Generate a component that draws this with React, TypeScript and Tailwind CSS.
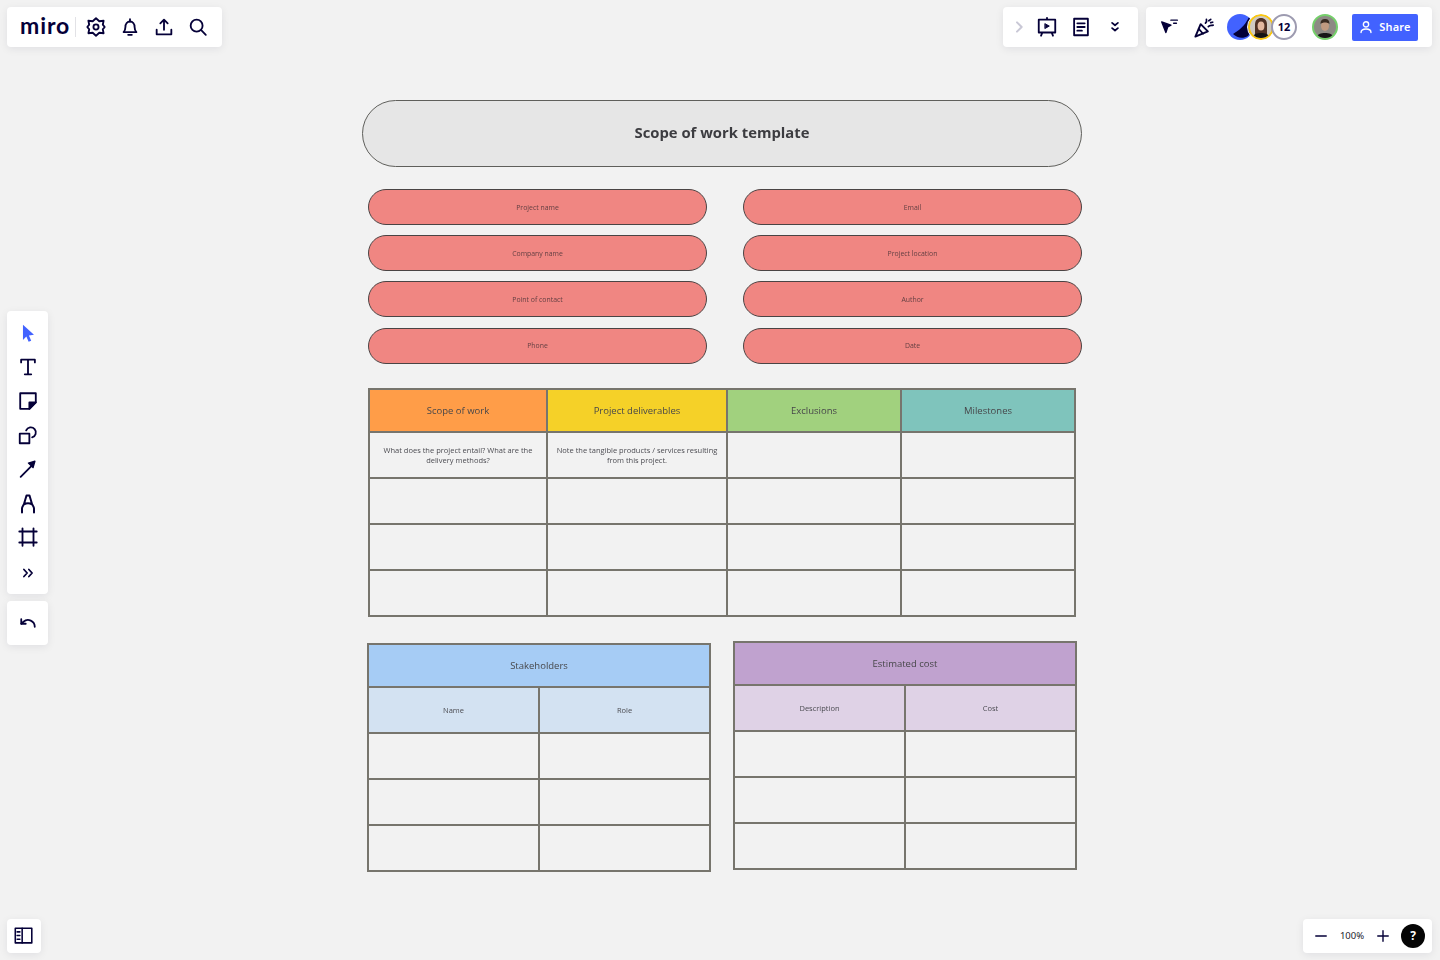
import type { ReactNode } from "react";

const INK = "#050038";

const PROJECT_FIELDS = ["Project name", "Email", "Company name", "Project location", "Point of contact", "Author", "Phone", "Date"];

function Icon({ children, size = 24 }: { children: ReactNode; size?: number }) {
  return (
    <svg width={size} height={size} viewBox="0 0 24 24" fill="none" stroke={INK} strokeWidth="2" strokeLinecap="round" strokeLinejoin="round">
      {children}
    </svg>
  );
}

function Slot({ children, className = "w-[34px] h-[34px]" }: { children: ReactNode; className?: string }) {
  return <div className={`${className} flex items-center justify-center shrink-0`}>{children}</div>;
}

function Panel({ children, className }: { children: ReactNode; className: string }) {
  return <div className={`absolute bg-white rounded-[4px] shadow-[0_2px_8px_rgba(5,0,56,0.08)] flex ${className}`}>{children}</div>;
}

function TopLeftBar() {
  return (
    <Panel className="left-[7px] top-[7px] w-[215px] h-[40px] items-center">
      <span className="ml-[13px] w-[52px] text-[23px] leading-none font-bold text-[#050038] tracking-[0.9px] font-['Lato',sans-serif] -mt-[3px]">miro</span>
      <div className="w-px h-[20px] bg-[#e2e2e6] ml-[3px] mr-[3px]" />
      <Slot>
        <Icon size={22}>
          <path d="M12 2.500l3.600 3.200 4.700-.5-.9 4.300L21.500 12l-2.100 2.500.9 4.300-4.700-.5-3.600 3.200-3.600-3.200-4.700.5.9-4.300L2.500 12l2.100-2.500-.9-4.300 4.700.5z" />
          <circle cx="12" cy="12" r="2.800" />
        </Icon>
      </Slot>
      <Slot>
        <Icon size={22}>
          <path d="M5 17.500c1.500-1.500 2-3 2-5.500 0-3.500 2-6 5-6s5 2.500 5 6c0 2.500.5 4 2 5.500z" />
          <path d="M12 3.500V6M10 20.500h4" />
        </Icon>
      </Slot>
      <Slot>
        <Icon size={22}>
          <path d="M12 15V4M8 8l4-4 4 4M4 15v5h16v-5" />
        </Icon>
      </Slot>
      <Slot>
        <Icon size={22}>
          <circle cx="10.500" cy="10.500" r="6.500" />
          <path d="M15.500 15.500L20.500 20.500" />
        </Icon>
      </Slot>
    </Panel>
  );
}

function PresentBar() {
  return (
    <Panel className="left-[1003px] top-[7px] w-[135px] h-[40px] items-center">
      <Slot className="w-[32px] h-[34px]">
        <svg width="16" height="16" viewBox="0 0 24 24" fill="none" stroke="#c9c8d6" strokeWidth="3" strokeLinecap="round" strokeLinejoin="round">
          <path d="M9 5l7 7-7 7" />
        </svg>
      </Slot>
      <Slot className="w-[24px] h-[34px]">
        <Icon size={22}>
          <path d="M12 2v2M3 4h18v14H3zM7 18l-1.500 3.500M17 18l1.500 3.500" />
          <path d="M10 8.500l4.500 2.500-4.500 2.500z" fill={INK} strokeWidth="1" />
        </Icon>
      </Slot>
      <Slot className="w-[44px] h-[34px]">
        <Icon size={22}>
          <path d="M4.500 3h15v18h-15zM8 8h8M8 12h8M8 16h5" />
        </Icon>
      </Slot>
      <Slot className="w-[24px] h-[34px]">
        <Icon size={14}>
          <path d="M7 5l5 4 5-4M7 14l5 4 5-4" strokeWidth="3" />
        </Icon>
      </Slot>
    </Panel>
  );
}

function CollabBar() {
  return (
    <Panel className="left-[1146px] top-[7px] w-[286px] h-[40px] items-center">
      <Slot className="w-[34px] h-[34px] ml-[7px]">
        <Icon size={22}>
          <path d="M3 6.500l10 3.500-3.500 2-2 6z" fill={INK} strokeWidth="1.500" />
          <path d="M13 4.500h7M16 8h3" strokeWidth="1.600" />
        </Icon>
      </Slot>
      <Slot className="w-[34px] h-[34px]">
        <Icon size={23}>
          <path d="M2.500 21.500L8 8.500l7.500 7.500z" />
          <path d="M6 13.500l4.500 5M13 7.500c1-1 1.500-2.500 1-4M16 11c1.500-1.500 3-1 5-1.500M16.500 5l2-1.500M18.500 7l2-.5" strokeWidth="1.800" />
        </Icon>
      </Slot>
      <div className="flex items-center ml-[6px] w-[72px] relative h-[26px]">
        <div className="w-[26px] h-[26px] rounded-full bg-[#4262ff] overflow-hidden shrink-0">
          <svg width="26" height="26" viewBox="0 0 26 26">
            <path d="M22 3C19 9 16 14 6 20C10 24 16 25 21 22L26 14L26 3z" fill="#050038" />
          </svg>
        </div>
        <div className="w-[26px] h-[26px] rounded-full border-[2px] border-[#fac710] bg-[#cfcac2] overflow-hidden shrink-0 -ml-[5px] z-10 outline outline-white">
          <svg width="22" height="22" viewBox="0 0 22 22">
            <path d="M5 20V9c0-5 2.500-7 6-7s6 2 6 7v11z" fill="#4f3124" />
            <ellipse cx="11" cy="10" rx="3.400" ry="4.600" fill="#e2b79e" />
            <path d="M2 22c1-4 5-5 9-5s8 1 9 5z" fill="#141414" />
          </svg>
        </div>
        <div className="w-[26px] h-[26px] rounded-full border-[2px] border-[#9d9bb0] bg-white shrink-0 -ml-[3px] z-20 flex items-center justify-center text-[11px] font-bold text-[#050038] font-['Noto_Sans',sans-serif]">12</div>
      </div>
      <div className="w-[26px] h-[26px] rounded-full border-[2px] border-[#75cf6b] bg-[#8d8a84] overflow-hidden shrink-0 ml-[13px]">
        <svg width="22" height="22" viewBox="0 0 22 22">
          <ellipse cx="11" cy="10" rx="4" ry="5" fill="#c09a80" />
          <path d="M6.500 8c0-4 2-5 4.500-5s4.500 1 4.500 5c-2-2-7-2-9 0z" fill="#3a2c22" />
          <path d="M2 22c1-4 5-5 9-5s8 1 9 5z" fill="#161616" />
        </svg>
      </div>
      <button className="ml-[14px] w-[66px] h-[27px] rounded-[2px] bg-[#4262ff] flex items-center justify-center gap-[6px] text-white text-[11px] font-semibold font-['Noto_Sans',sans-serif] tracking-[0.2px]">
        <svg width="14" height="14" viewBox="0 0 24 24" fill="none" stroke="#fff" strokeWidth="2.400" strokeLinecap="round" strokeLinejoin="round">
          <circle cx="12" cy="7.500" r="4.500" />
          <path d="M3.500 21.500c0-4 3.500-6 8.500-6s8.500 2 8.500 6" />
        </svg>
        Share
      </button>
    </Panel>
  );
}

function ToolBar() {
  return (
    <Panel className="left-[7px] top-[311px] w-[41px] h-[283px] flex-col items-center pt-[5px]">
      <Slot>
        <svg width="22" height="22" viewBox="0 0 24 24" fill="#4262ff">
          <path d="M6.500 3l12 11-5.500.8 2.500 5.700-2.800 1-2.500-5.700-3.700 3.700z" />
        </svg>
      </Slot>
      <Slot>
        <Icon size={22}>
          <path d="M4.500 7V4h15v3M12 4v16M8.500 20h7" />
        </Icon>
      </Slot>
      <Slot>
        <Icon size={22}>
          <path d="M3.500 3.500h17v10l-7 7h-10z" />
          <path d="M20.500 13.500l-7 7v-7z" fill={INK} />
        </Icon>
      </Slot>
      <Slot>
        <Icon size={22}>
          <rect x="3" y="10.500" width="10.500" height="10.500" />
          <path d="M10 7a5.500 5.500 0 1 1 6.500 7.500" />
        </Icon>
      </Slot>
      <Slot>
        <Icon size={22}>
          <path d="M4 20.500L17 7.500" />
          <path d="M12.500 5.500l7-2-2 7z" fill={INK} strokeWidth="1.500" />
        </Icon>
      </Slot>
      <Slot>
        <Icon size={24}>
          <path d="M6 21.500v-4c0-1.500.8-2.500 2-4.500l2.500-8.500h3L16 13c1.200 2 2 3 2 4.500v4M8 13.500c2.500-1.500 5.500-1.500 8 0" />
        </Icon>
      </Slot>
      <Slot>
        <Icon size={22}>
          <path d="M6 2.500v19M18 2.500v19M2.500 6h19M2.500 18h19" />
        </Icon>
      </Slot>
      <Slot className="w-[34px] h-[34px] mt-[2px]">
        <Icon size={14}>
          <path d="M5 6l5.500 6L5 18M13.500 6l5.500 6-5.500 6" strokeWidth="3" />
        </Icon>
      </Slot>
    </Panel>
  );
}

function UndoBar() {
  return (
    <Panel className="left-[7px] top-[601px] w-[41px] h-[44px] items-center justify-center">
      <Icon size={18}>
        <path d="M3 7v6h6" strokeWidth="2.400" />
        <path d="M21 17a9 9 0 0 0-15-6.700L3 13" strokeWidth="2.400" />
      </Icon>
    </Panel>
  );
}

function SidebarToggle() {
  return (
    <Panel className="left-[7px] top-[919px] w-[34px] h-[34px] items-center justify-center">
      <Icon size={22}>
        <rect x="2.500" y="3.500" width="18" height="16" strokeWidth="1.700" />
        <path d="M10 3.500v16M4.500 7.500h3M4.500 11.500h3M4.500 15.500h3" strokeWidth="1.700" />
      </Icon>
    </Panel>
  );
}

function ZoomBar() {
  return (
    <Panel className="left-[1303px] top-[919px] w-[129px] h-[34px] items-center">
      <Slot className="w-[36px] h-[34px]">
        <Icon size={14}>
          <path d="M3 12h18" strokeWidth="2.400" />
        </Icon>
      </Slot>
      <span className="w-[26px] text-center text-[9.500px] text-[#1c1c2c] font-['Noto_Sans',sans-serif]">100%</span>
      <Slot className="w-[36px] h-[34px]">
        <Icon size={14}>
          <path d="M3 12h18M12 3v18" strokeWidth="2.400" />
        </Icon>
      </Slot>
      <div className="w-[24px] h-[24px] rounded-full bg-[#050505] flex items-center justify-center text-white text-[12px] font-bold font-['Noto_Sans',sans-serif]">?</div>
    </Panel>
  );
}

function Cell({ children, className = "", small = false }: { children?: ReactNode; className?: string; small?: boolean }) {
  return (
    <div className={`flex items-center justify-center text-center border-r-2 border-b-2 border-[#77756d] ${small ? "text-[7.500px] leading-[10px] text-[#4c4c52]" : "pt-[2px] text-[9.500px] text-[#47474a]"} ${className}`}>
      {children}
    </div>
  );
}

function ScopeTable() {
  const empty = Array.from({ length: 12 });
  return (
    <div className="ml-[6px] mt-[24.400px] grid grid-cols-[178px_180px_174px_174px] grid-rows-[43px_46px_46px_46px_46px] w-[708px] border-l-2 border-t-2 border-[#77756d]">
      <Cell className="bg-[#ff9d48]">Scope of work</Cell>
      <Cell className="bg-[#f5d128]">Project deliverables</Cell>
      <Cell className="bg-[#a1d17e]">Exclusions</Cell>
      <Cell className="bg-[#7fc4bc]">Milestones</Cell>
      <Cell small className="px-[12px]">What does the project entail? What are the delivery methods?</Cell>
      <Cell small className="px-[8px]">Note the tangible products / services resulting from this project.</Cell>
      <Cell />
      <Cell />
      {empty.map((_, i) => <Cell key={i} />)}
    </div>
  );
}

function CostTable({ title, left, right, head, sub, className }: { title: string; left: string; right: string; head: string; sub: string; className: string }) {
  const empty = Array.from({ length: 6 });
  return (
    <div className={`grid grid-cols-[171px_171px] grid-rows-[43px_46px_46px_46px_46px] w-[344px] border-l-2 border-t-2 border-[#77756d] ${className}`}>
      <Cell className={`col-span-2 ${head}`}>{title}</Cell>
      <Cell small className={sub}>{left}</Cell>
      <Cell small className={sub}>{right}</Cell>
      {empty.map((_, i) => <Cell key={i} />)}
    </div>
  );
}

function Board() {
  return (
    <div className="pt-[100px] pl-[362px] w-[1100px] font-['Open_Sans',sans-serif] blur-[0.3px]">
      <div className="w-[720px] h-[67px] pb-[2px] rounded-[34px] bg-[#e6e6e6] border border-[#5f5f5b] flex items-center justify-center text-[14.800px] font-bold text-[#3c3c40]">
        Scope of work template
      </div>
      <div className="ml-[6px] mt-[22px] w-[714px] grid grid-cols-[339px_339px] grid-rows-[36px_36px_36px_36px] gap-x-[36px] gap-y-[10.200px]">
        {PROJECT_FIELDS.map(f => (
          <div key={f} className="rounded-[18px] pt-[1.500px] bg-[#f08682] border border-[#4a4444] flex items-center justify-center text-[6.900px] text-[#623f42]">
            {f}
          </div>
        ))}
      </div>
      <ScopeTable />
      <div className="flex items-start mt-[24px] ml-[5px]">
        <CostTable title="Stakeholders" left="Name" right="Role" head="bg-[#a6ccf5]" sub="bg-[#d3e2f2]" className="mt-[2px]" />
        <CostTable title="Estimated cost" left="Description" right="Cost" head="bg-[#c0a2cf]" sub="bg-[#dfd2e6]" className="ml-[22px]" />
      </div>
    </div>
  );
}

export default function App() {
  return (
    <div className="relative w-full h-[960px] bg-[#f2f2f2] overflow-hidden">
      <Board />
      <TopLeftBar />
      <PresentBar />
      <CollabBar />
      <ToolBar />
      <UndoBar />
      <SidebarToggle />
      <ZoomBar />
    </div>
  );
}
